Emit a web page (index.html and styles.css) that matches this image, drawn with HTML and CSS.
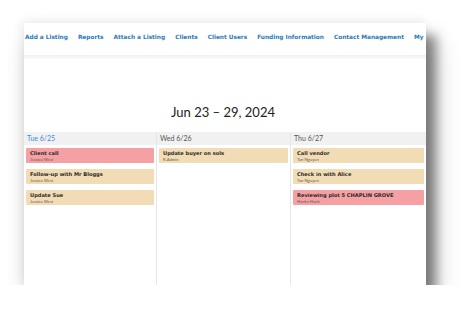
FILE: index.html
```html
<!DOCTYPE html>
<html lang="en">
<head>
    <meta charset="UTF-8">
    <meta name="viewport" content="width=device-width, initial-scale=1">
    <title>Calendar</title>
    <link rel="stylesheet" href="styles.css">
</head>
<body>
    <div class="shot">
        <nav class="top-nav">
            <a href="#">Add a Listing</a>
            <a href="#">Reports</a>
            <a href="#">Attach a Listing</a>
            <a href="#">Clients</a>
            <a href="#">Client Users</a>
            <a href="#">Funding Information</a>
            <a href="#">Contact Management</a>
            <a href="#">My</a>
        </nav>
        <div class="nav-strip"></div>

        <h1 class="week-title">Jun 23 &ndash; 29, 2024</h1>

        <div class="week">
            <div class="day">
                <div class="day-head today">Tue 6/25</div>
                <div class="event red">
                    <div class="ev-title">Client call</div>
                    <div class="ev-who">Jessica West</div>
                </div>
                <div class="event tan">
                    <div class="ev-title">Follow-up with Mr Bloggs</div>
                    <div class="ev-who">Jessica West</div>
                </div>
                <div class="event tan">
                    <div class="ev-title">Update Sue</div>
                    <div class="ev-who">Jessica West</div>
                </div>
            </div>
            <div class="day">
                <div class="day-head">Wed 6/26</div>
                <div class="event tan">
                    <div class="ev-title">Update buyer on sols</div>
                    <div class="ev-who">K Admin</div>
                </div>
            </div>
            <div class="day">
                <div class="day-head">Thu 6/27</div>
                <div class="event tan">
                    <div class="ev-title">Call vendor</div>
                    <div class="ev-who">Tan Nguyen</div>
                </div>
                <div class="event tan">
                    <div class="ev-title">Check in with Alice</div>
                    <div class="ev-who">Tan Nguyen</div>
                </div>
                <div class="event red">
                    <div class="ev-title">Reviewing plot 5 CHAPLIN GROVE</div>
                    <div class="ev-who">Hanhz Hanh</div>
                </div>
            </div>
        </div>
    </div>
</body>
</html>
```

FILE: styles.css
```css
body {
    margin: 0;
    padding: 23px 0 0 24px;
    background-color: #ffffff;
    font-family: "Lato", "Open Sans", sans-serif;
}

.shot {
    width: 402px;
    height: 262px;
    background-color: #ffffff;
    overflow: hidden;
    display: flex;
    flex-direction: column;
    box-shadow: 10px 12px 10px rgba(0, 0, 0, 0.4), 8px 18px 24px rgba(0, 0, 0, 0.25), -2px -2px 10px rgba(0, 0, 0, 0.08);
}

.top-nav {
    height: 32px;
    box-sizing: border-box;
    display: flex;
    align-items: flex-start;
    gap: 10px;
    padding: 11px 0 0 1px;
    white-space: nowrap;
}

.top-nav a {
    font-family: "DejaVu Sans", sans-serif;
    font-size: 5.8px;
    font-weight: bold;
    color: #2a7ab6;
    text-decoration: none;
    flex-shrink: 0;
}

.nav-strip {
    height: 4px;
    background: linear-gradient(#f0f0f0, #fafafa);
}

.week-title {
    margin: 0;
    height: 73px;
    display: flex;
    align-items: center;
    justify-content: center;
    padding: 33px 4px 0 0;
    box-sizing: border-box;
    font-size: 13px;
    font-weight: normal;
    color: #222;
}

.week {
    flex: 1;
    display: grid;
    grid-template-columns: 133px 134px 135px;
}

.day {
    border-right: 1px solid #e6e6e6;
}

.day:last-child {
    border-right: none;
}

.day-head {
    height: 13px;
    line-height: 13px;
    background-color: #f1f1f1;
    font-size: 7px;
    color: #555;
    padding-left: 3px;
    margin-bottom: 3px;
}

.day-head.today {
    color: #3c8fd6;
}

.event {
    height: 15px;
    margin: 0 2px 6px 2px;
    padding: 2px 4px 0 4px;
    box-sizing: border-box;
    border-radius: 1px;
}

.red {
    background-color: #f5a0a2;
}

.tan {
    background-color: #f2dcb5;
}

.ev-title {
    font-family: "DejaVu Sans", sans-serif;
    font-size: 5.1px;
    font-weight: bold;
    color: #2a2a2a;
    line-height: 7px;
}

.ev-who {
    font-size: 4.2px;
    color: #6a5a50;
    line-height: 5px;
}
```
